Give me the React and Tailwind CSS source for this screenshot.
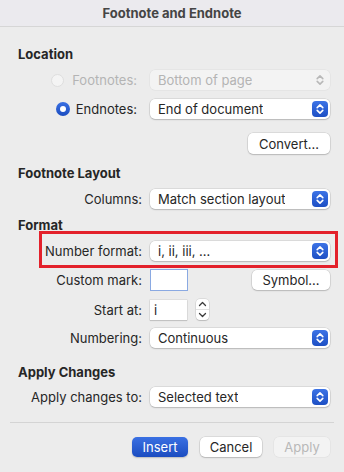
import React from "react";

const font = { fontFamily: "Inter, 'Liberation Sans', sans-serif" };

function Chevrons({ color = "white" }) {
  return (
    <svg width="16" height="16" viewBox="0 0 16 16" fill="none">
      <path d="M5.2 6.6 L8 3.9 L10.8 6.6" stroke={color} strokeWidth="1.6" strokeLinecap="round" strokeLinejoin="round" />
      <path d="M5.2 9.4 L8 12.1 L10.8 9.4" stroke={color} strokeWidth="1.6" strokeLinecap="round" strokeLinejoin="round" />
    </svg>
  );
}

function Popup({ children, disabled }) {
  return (
    <div
      className={`flex items-center h-[20px] w-[180px] rounded-[5px] pl-[8px] pr-[2px] ${
        disabled
          ? "bg-[#f3f3f3] text-[#b4b4b4] shadow-[0_0_0_0.5px_rgba(0,0,0,0.06)]"
          : "bg-white text-[#262626] shadow-[0_0_0_0.5px_rgba(0,0,0,0.14),0_1px_1.5px_rgba(0,0,0,0.16)]"
      }`}
    >
      <span className="truncate">{children}</span>
      <span
        className={`ml-auto w-[16px] h-[16px] rounded-[4px] flex items-center justify-center ${
          disabled ? "" : "bg-gradient-to-b from-[#3c73e6] to-[#1d4fc4]"
        }`}
      >
        <Chevrons color={disabled ? "#b8b8b8" : "white"} />
      </span>
    </div>
  );
}

function Button({ children, className = "" }) {
  return (
    <div
      className={`h-[20px] rounded-[5px] bg-white text-[#262626] flex items-center justify-center shadow-[0_0_0_0.5px_rgba(0,0,0,0.14),0_1px_1.5px_rgba(0,0,0,0.16)] ${className}`}
    >
      {children}
    </div>
  );
}

function Row({ label, children, className = "" }) {
  return (
    <div className={`flex items-center ${className}`}>
      <div className="w-[124px] text-right text-[#262626]">{label}</div>
      <div className="ml-[8px] flex-1 flex items-center">{children}</div>
    </div>
  );
}

export default function App() {
  return (
    <div className="relative w-[344px] h-[472px] bg-[#ececec] text-[13px] leading-4 overflow-hidden" style={font}>
      <div className="h-[27px] bg-[#ebeaee] border-b border-[#d6d6d6] flex items-center justify-center font-bold text-[#454545]">
        Footnote and Endnote
      </div>

      <div className="pl-[18px] pr-[14px]">
        <div className="mt-[19px] h-4 font-bold text-[#262626]">Location</div>

        <div className="mt-[8px] flex items-center h-[20px]">
          <div className="w-[119px] flex items-center justify-end gap-[8px] text-[#b4b4b4]">
            <span className="w-[13px] h-[13px] rounded-full bg-[#f4f4f4] border border-[#dedede]" />
            <span>Footnotes:</span>
          </div>
          <div className="ml-[13px]">
            <Popup disabled>Bottom of page</Popup>
          </div>
        </div>

        <div className="mt-[9px] flex items-center h-[20px]">
          <div className="w-[119px] flex items-center justify-end gap-[6px] text-[#262626]">
            <span className="w-[14px] h-[14px] rounded-full bg-gradient-to-b from-[#3a70e3] to-[#1b4cc0] flex items-center justify-center">
              <span className="w-[6px] h-[6px] rounded-full bg-white" />
            </span>
            <span>Endnotes:</span>
          </div>
          <div className="ml-[13px]">
            <Popup>End of document</Popup>
          </div>
        </div>

        <div className="mt-[14px] flex justify-end">
          <Button className="w-[82px] h-[21px]">Convert…</Button>
        </div>

        <div className="mt-[11px] h-4 font-bold text-[#262626]">Footnote Layout</div>
        <Row label="Columns:" className="mt-[8px] h-[20px]">
          <Popup>Match section layout</Popup>
        </Row>

        <div className="mt-[8px] h-4 font-bold text-[#262626]">Format</div>
        <Row label="Number format:" className="mt-[8px] h-[20px]">
          <Popup>i, ii, iii, …</Popup>
        </Row>

        <Row label="Custom mark:" className="mt-[8px] h-[22px]">
          <div className="w-[38px] h-[22px] bg-white border border-[#8aa9e2]" />
          <Button className="ml-auto w-[78px]">Symbol…</Button>
        </Row>

        <Row label="Start at:" className="mt-[8px] h-[21px]">
          <div className="w-[37px] h-[20px] bg-white pl-[4px] flex items-center text-[#262626] shadow-[0_0_0_0.5px_rgba(0,0,0,0.12),0_1px_1px_rgba(0,0,0,0.12)]">
            i
          </div>
          <div className="ml-[9px] w-[13px] h-[21px] rounded-[4px] bg-white flex flex-col shadow-[0_0_0_0.5px_rgba(0,0,0,0.14),0_1px_1px_rgba(0,0,0,0.14)]">
            <div className="flex-1 flex items-center justify-center border-b border-[#e2e2e2]">
              <svg width="9" height="6" viewBox="0 0 9 6" fill="none">
                <path d="M1.5 4.5 L4.5 1.5 L7.5 4.5" stroke="#3a3a3a" strokeWidth="1.3" strokeLinecap="round" strokeLinejoin="round" />
              </svg>
            </div>
            <div className="flex-1 flex items-center justify-center">
              <svg width="9" height="6" viewBox="0 0 9 6" fill="none">
                <path d="M1.5 1.5 L4.5 4.5 L7.5 1.5" stroke="#3a3a3a" strokeWidth="1.3" strokeLinecap="round" strokeLinejoin="round" />
              </svg>
            </div>
          </div>
        </Row>

        <Row label="Numbering:" className="mt-[8px] h-[20px]">
          <Popup>Continuous</Popup>
        </Row>

        <div className="mt-[16px] h-4 font-bold text-[#262626]">Apply Changes</div>
        <Row label="Apply changes to:" className="mt-[7px] h-[20px]">
          <Popup>Selected text</Popup>
        </Row>
      </div>

      <div className="mt-[15px] mx-[10px] h-px bg-[#d4d4d4]" />

      <div className="mt-[14px] pr-[14px] flex justify-end gap-[12px]">
        <div className="w-[56px] h-[20px] rounded-[5px] bg-gradient-to-b from-[#3a70e3] to-[#1b4cc0] text-white flex items-center justify-center shadow-[0_1px_1.5px_rgba(0,0,0,0.2)]">
          Insert
        </div>
        <Button className="w-[62px]">Cancel</Button>
        <div className="w-[56px] h-[20px] rounded-[5px] bg-[#f3f3f3] text-[#b8b8b8] flex items-center justify-center shadow-[0_0_0_0.5px_rgba(0,0,0,0.06)]">
          Apply
        </div>
      </div>

      <div className="absolute left-[39px] top-[231px] w-[299px] h-[37px] border-[3px] border-[#e3212b]" />
    </div>
  );
}
